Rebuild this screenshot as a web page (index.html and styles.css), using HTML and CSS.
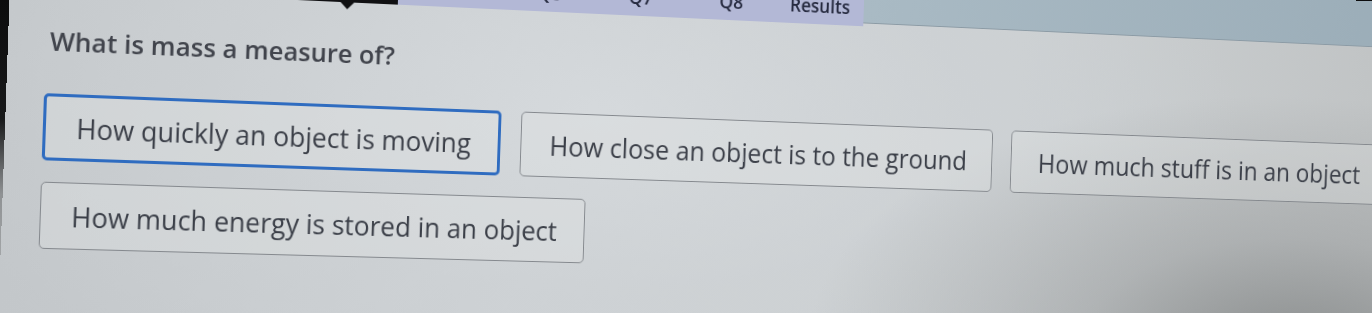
FILE: index.html
```html
<!DOCTYPE html>
<html lang="en">
<head>
    <meta charset="UTF-8">
    <meta name="viewport" content="width=device-width, initial-scale=1.0">
    <title>Quiz - Q8</title>
    <link rel="stylesheet" href="styles.css">
</head>
<body>
    <div class="screen">
        <div class="topbar">
            <div class="tip-area"><span class="tip-arrow"></span></div>
            <nav class="tabs">
                <a href="#" class="tab">Q6</a>
                <a href="#" class="tab">Q7</a>
                <a href="#" class="tab">Q8</a>
                <a href="#" class="tab tab-results">Results</a>
            </nav>
            <div class="topbar-rest"></div>
        </div>
        <main class="quiz">
            <h1 class="question">What is mass a measure of?</h1>
            <div class="options">
                <button class="option selected">How quickly an object is moving</button>
                <button class="option">How close an object is to the ground</button>
                <button class="option">How much stuff is in an object</button>
                <button class="option">How much energy is stored in an object</button>
            </div>
        </main>
    </div>
</body>
</html>
```

FILE: styles.css
```css
html, body {
    margin: 0;
    padding: 0;
    height: 100%;
    overflow: hidden;
}
body {
    background: linear-gradient(to bottom, #0c0c0d 0%, #18191a 38%, #8f9294 62%, #b3b6b8 100%);
    font-family: 'Open Sans', 'Noto Sans', sans-serif;
}
/* the photo is taken at an angle: tilt + a little depth to the right */
.screen {
    width: 1520px;
    height: 440px;
    margin: -54px 0 0 6px;
    transform: perspective(2300px) rotateY(10deg) rotate(2deg);
    transform-origin: 268px 196px;
    background:
        radial-gradient(ellipse 560px 280px at 92% 88%, rgba(128, 131, 131, 0.85) 0%, rgba(150, 153, 154, 0.5) 45%, rgba(170, 173, 174, 0) 100%),
        radial-gradient(ellipse 900px 420px at 40% 35%, rgba(214, 218, 221, 0.9) 0%, rgba(206, 210, 213, 0.6) 45%, rgba(206, 210, 213, 0) 80%),
        linear-gradient(to right, #c3c7ca 0%, #cdd1d4 35%, #ccd0d2 70%, #c0c3c4 100%);
}
.topbar {
    display: flex;
    align-items: flex-start;
    height: 57px;
}
.tip-area {
    width: 390px;
    height: 53px;
    background-color: #101012;
    position: relative;
}
.tip-arrow {
    position: absolute;
    left: 330px;
    bottom: -7px;
    width: 0;
    height: 0;
    border-left: 8px solid transparent;
    border-right: 8px solid transparent;
    border-top: 8px solid #101012;
}
.tabs {
    display: flex;
    justify-content: flex-end;
    width: 500px;
    height: 53px;
    background-color: #b3b8d6;
}
.tab {
    width: 98px;
    display: flex;
    align-items: flex-end;
    justify-content: center;
    padding-bottom: 6px;
    box-sizing: border-box;
    color: #262a3f;
    font-size: 19px;
    font-weight: 600;
    text-decoration: none;
}
.tab-results {
    width: 97px;
}
.topbar-rest {
    flex: 1;
    height: 49px;
    background: linear-gradient(to right, #a9bac4, #9badb8);
    border-bottom: 1px solid #8c9ba5;
}
.quiz {
    padding: 31px 0 0 41px;
}
.question {
    margin: 0;
    color: #41444c;
    font-size: 26px;
    font-weight: 600;
    line-height: 32px;
}
.options {
    display: flex;
    flex-wrap: wrap;
    gap: 21px 21px;
    margin-top: 36px;
    margin-left: -4px;
}
.option {
    height: 66px;
    padding: 0 28px 0 30px;
    background-color: rgba(225, 228, 230, 0.35);
    border: 1.5px solid #85898e;
    border-radius: 5px;
    color: #3b3f48;
    font-family: 'Open Sans', 'Noto Sans', sans-serif;
    font-size: 27px;
    font-weight: 500;
    cursor: pointer;
}
.option.selected {
    border: 3px solid #2f6cc0;
}
```
